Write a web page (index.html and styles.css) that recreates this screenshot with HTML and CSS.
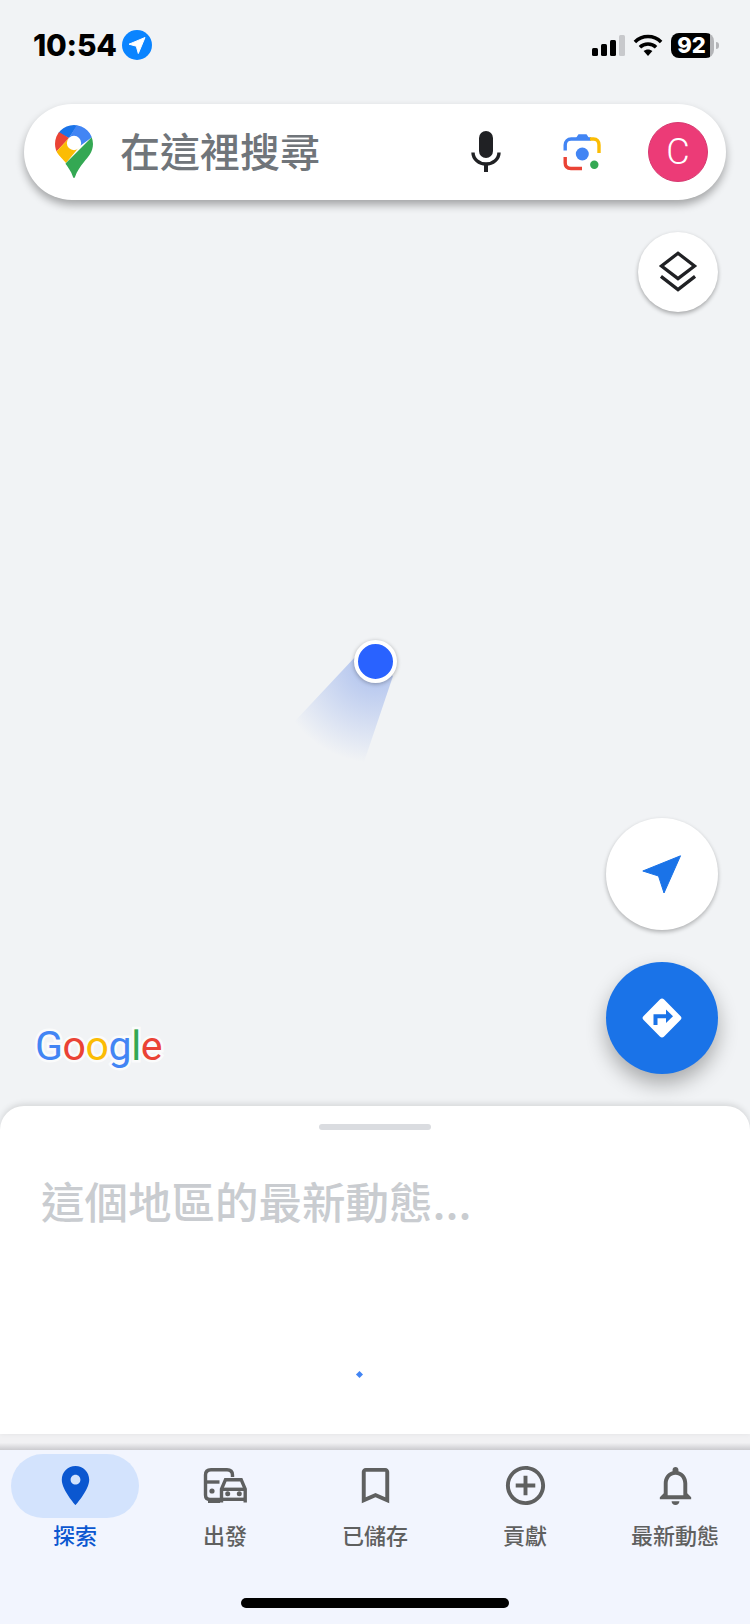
FILE: index.html
```html
<!DOCTYPE html>
<html lang="zh-Hant">
<head>
<meta charset="utf-8">
<title>Google Maps</title>
<link rel="stylesheet" href="styles.css">
</head>
<body>
<div class="app">
  <main class="map">
    <svg class="beam" width="120" height="130" viewBox="0 0 120 130">
      <defs>
        <radialGradient id="beamFill" gradientUnits="userSpaceOnUse" cx="100" cy="10" r="102">
          <stop offset="0" stop-color="#2a5fe0" stop-opacity=".36"/>
          <stop offset=".45" stop-color="#2a5fe0" stop-opacity=".2"/>
          <stop offset="1" stop-color="#2a5fe0" stop-opacity="0"/>
        </radialGradient>
      </defs>
      <polygon points="80,5 117,25 85,120 5,85" fill="url(#beamFill)"/>
    </svg>
    <div class="dot"></div>

    <header class="status">
      <div class="status-left">
        <span class="time">10:54</span>
        <svg class="loc" width="30" height="30" viewBox="0 0 30 30">
          <circle cx="15" cy="15" r="15" fill="#0a84ff"/>
          <path d="M7 14.2 23 7.5 16.3 23.5 14.3 16.2Z" fill="#fff" stroke="#fff" stroke-linejoin="round"/>
        </svg>
      </div>
      <div class="status-right">
        <div class="signal">
          <span class="bar bar1"></span><span class="bar bar2"></span><span class="bar bar3"></span><span class="bar bar4"></span>
        </div>
        <svg class="wifi" width="30" height="22" viewBox="0 0 28 21">
          <path d="M1.5 7.6C8.5.7 19.5.7 26.5 7.6" fill="none" stroke="#000" stroke-width="3.4"/>
          <path d="M6.3 12.6C10.5 8.6 17.5 8.6 21.7 12.6" fill="none" stroke="#000" stroke-width="3.4"/>
          <path d="M9.8 16.2C12 14.2 16 14.2 18.2 16.2L14 21Z" fill="#000"/>
        </svg>
        <div class="battery"><span class="battery-num">92</span></div>
        <span class="battery-tip"></span>
      </div>
    </header>

    <div class="search">
      <svg class="maps-pin" width="38" height="54" viewBox="0 0 38 54">
        <defs>
          <clipPath id="pinClip">
            <path d="M19 0C8.5 0 0 8.5 0 19c0 8 5 13 9 18 4 5 7 9 9 15 .4 1.4 1.6 1.4 2 0 2-6 5-10 9-15 4-5 9-10 9-18C38 8.500 29.500 0 19 0Z"/>
          </clipPath>
        </defs>
        <g clip-path="url(#pinClip)">
          <polygon points="-2,-2 24,-2 14,13 3,8" fill="#1a73e8"/>
          <polygon points="23,-2 42,-2 40,10 25,21 14,13" fill="#4285f4"/>
          <polygon points="-2,-2 4,7 14,13 1,27 -2,27" fill="#ea4335"/>
          <polygon points="1,27 14,13 25,21 11,38" fill="#fbbc04"/>
          <polygon points="39,10 42,60 -4,60 11,38" fill="#34a853"/>
        </g>
        <circle cx="19" cy="18" r="7.200" fill="#fff"/>
      </svg>
      <span class="search-text">在這裡搜尋</span>
      <svg class="mic" width="30" height="42" viewBox="0 0 30 42">
        <rect x="8" y="0" width="14" height="27" rx="7" fill="#202124"/>
        <path d="M2 21.500C2 28 8 33 15 33s13-5 13-11.500" fill="none" stroke="#202124" stroke-width="3.400"/>
        <rect x="13" y="32" width="4" height="9" fill="#202124"/>
      </svg>
      <svg class="lens" width="40" height="40" viewBox="0 0 40 40">
        <path d="M3.200 18.500V13c0-3.700 2.600-6 6-6H29" fill="none" stroke="#4285f4" stroke-width="3.400"/>
        <path d="M13 7.500 16.500 2.200H24.500L28 7.500Z" fill="#4285f4"/>
        <path d="M28 7H31.500C35 7 37 9.500 37 13V21" fill="none" stroke="#fbbc04" stroke-width="3.400"/>
        <path d="M3.200 25V31C3.200 34.500 5.500 36.500 9 36.500H20" fill="none" stroke="#ea4335" stroke-width="3.400"/>
        <circle cx="20.300" cy="22" r="6.500" fill="#4285f4"/>
        <circle cx="32.300" cy="32.700" r="4.200" fill="#34a853"/>
      </svg>
      <div class="avatar">C</div>
    </div>

    <button class="round layers" type="button" aria-label="圖層">
      <svg width="44" height="44" viewBox="0 0 40 40">
        <path d="M20 3 35 14.500 20 26 5 14.500Z" fill="none" stroke="#202124" stroke-width="3" stroke-linejoin="miter"/>
        <path d="M4.500 24 20 36 35.500 24" fill="none" stroke="#202124" stroke-width="3"/>
      </svg>
    </button>

    <div class="map-foot">
      <div class="google"><span class="g-blue">G</span><span class="g-red">o</span><span class="g-yellow">o</span><span class="g-blue">g</span><span class="g-green">l</span><span class="g-red">e</span></div>
      <div class="fabs">
        <button class="round fab" type="button" aria-label="定位">
          <svg width="48" height="48" viewBox="0 0 48 48">
            <path d="M4.800 21 42.500 5.800 26 43 20.500 26Z" fill="#1a73e8" stroke="#1a73e8" stroke-linejoin="round"/>
          </svg>
        </button>
        <button class="round fab fab-blue" type="button" aria-label="路線">
          <svg width="44" height="44" viewBox="0 0 44 44">
            <rect x="7.500" y="7.500" width="29" height="29" rx="3" fill="#fff" transform="rotate(45 22 22)"/>
            <path d="M15.500 29V20.300H27" fill="none" stroke="#1a73e8" stroke-width="4"/>
            <path d="M26 13.500 33 20.300 26 27Z" fill="#1a73e8"/>
          </svg>
        </button>
      </div>
    </div>
  </main>

  <section class="sheet">
    <div class="handle"></div>
    <h2 class="sheet-title">這個地區的最新動態...</h2>
    <div class="spinner"></div>
  </section>
  <div class="strip"></div>

  <nav class="nav">
    <div class="tabs">
      <div class="tab tab-active">
        <div class="tab-icon">
          <svg width="47" height="47" viewBox="0 0 24 24"><path d="M12 2C8.130 2 5 5.130 5 9c0 5.250 7 13 7 13s7-7.750 7-13c0-3.870-3.130-7-7-7zm0 9.500c-1.380 0-2.500-1.120-2.500-2.500s1.120-2.500 2.500-2.500 2.500 1.120 2.500 2.500-1.120 2.500-2.500 2.500z"/></svg>
        </div>
        <span class="tab-label">探索</span>
      </div>
      <div class="tab">
        <div class="tab-icon">
          <svg class="commute" width="46" height="40" viewBox="0 0 46 40">
            <g class="line-icon">
              <path d="M29.500 11V9Q29.500 3.700 24 3.700H8Q2.500 3.700 2.500 9V29Q2.500 33.500 7 33.500H17"/>
              <path d="M3 16H16.500"/>
              <path d="M18.500 36.500V23L22.500 13.700H38.200L42.200 23V36.500"/>
              <path d="M18.500 23.300H42.200"/>
              <path d="M18.500 33.300H42.200"/>
            </g>
            <rect x="5" y="33" width="12" height="4"/>
            <circle cx="9" cy="25" r="2.600"/>
            <circle cx="24.700" cy="27.700" r="2.500"/>
            <circle cx="36.300" cy="27.700" r="2.500"/>
          </svg>
        </div>
        <span class="tab-label">出發</span>
      </div>
      <div class="tab">
        <div class="tab-icon">
          <svg width="47" height="47" viewBox="0 0 24 24"><path d="M17 3H7c-1.100 0-2 .9-2 2v16l7-3 7 3V5c0-1.100-.9-2-2-2zm0 15l-5-2.180L7 18V5h10v13z"/></svg>
        </div>
        <span class="tab-label">已儲存</span>
      </div>
      <div class="tab">
        <div class="tab-icon">
          <svg width="47" height="47" viewBox="0 0 24 24"><path d="M13 7h-2v4H7v2h4v4h2v-4h4v-2h-4V7zm-1-5C6.480 2 2 6.480 2 12s4.480 10 10 10 10-4.480 10-10S17.520 2 12 2zm0 18c-4.410 0-8-3.590-8-8s3.590-8 8-8 8 3.590 8 8-3.590 8-8 8z"/></svg>
        </div>
        <span class="tab-label">貢獻</span>
      </div>
      <div class="tab">
        <div class="tab-icon">
          <svg width="47" height="47" viewBox="0 0 24 24"><path d="M12 22c1.100 0 2-.9 2-2h-4c0 1.100.9 2 2 2zm6-6v-5c0-3.070-1.630-5.640-4.500-6.320V4c0-.83-.67-1.500-1.500-1.500s-1.500.67-1.500 1.500v.68C7.640 5.360 6 7.920 6 11v5l-2 2v1h16v-1l-2-2zm-2 1H8v-6c0-2.480 1.510-4.500 4-4.500s4 2.020 4 4.500v6z"/></svg>
        </div>
        <span class="tab-label">最新動態</span>
      </div>
    </div>
    <div class="home-bar"></div>
  </nav>
</div>
</body>
</html>
```
FILE: styles.css
```css
* { box-sizing: border-box; }
html, body { margin: 0; padding: 0; }
body {
  width: 750px;
  height: 1624px;
  overflow: hidden;
  background: #f1f3f5;
  font-family: "Noto Sans CJK TC", "Noto Sans", sans-serif;
}
.app { display: flex; flex-direction: column; height: 1624px; }

/* Map */
.map {
  position: relative;
  display: flex;
  flex-direction: column;
  height: 1106px;
  flex: none;
  background: #f1f3f5;
}
.beam { position: absolute; left: 276px; top: 651px; }
.dot {
  position: absolute;
  left: 354px;
  top: 640px;
  width: 43px;
  height: 43px;
  border-radius: 50%;
  background: #2962ff;
  border: 4px solid #fff;
  box-shadow: 0 1px 4px rgba(0, 0, 0, .3);
}

/* Status bar */
.status {
  display: flex;
  justify-content: space-between;
  align-items: center;
  height: 90px;
  padding: 0 31px 0 33px;
}
.status-left { display: flex; align-items: center; gap: 5px; }
.time {
  font-family: Inter, "Liberation Sans", sans-serif;
  font-weight: 800;
  font-size: 30px;
  line-height: 36px;
  letter-spacing: -.2px;
  color: #000;
}
.status-right { display: flex; align-items: center; }
.signal { display: flex; align-items: flex-end; gap: 3px; height: 21px; margin-right: 8px; }
.bar { display: block; width: 6px; background: #000; border-radius: 1.5px; }
.bar1 { height: 8px; }
.bar2 { height: 12px; }
.bar3 { height: 16px; }
.bar4 { height: 21px; background: #c8c9cc; }
.wifi { margin-right: 8px; }
.battery {
  display: flex;
  align-items: center;
  justify-content: center;
  width: 43px;
  height: 25px;
  border-radius: 8px;
  background: linear-gradient(90deg, #000 0, #000 90%, #b4b5b8 90%);
}
.battery-num {
  font-family: Inter, "Liberation Sans", sans-serif;
  font-weight: 800;
  font-size: 22px;
  line-height: 25px;
  color: #fff;
  margin-right: 2px;
}
.battery-tip {
  display: block;
  width: 3px;
  height: 7px;
  margin-left: 2px;
  border-radius: 0 3px 3px 0;
  background: #b4b5b8;
}

/* Search */
.search {
  display: flex;
  align-items: center;
  height: 96px;
  margin: 14px 24px 0;
  border-radius: 48px;
  background: #fff;
  box-shadow: 0 5px 9px rgba(0, 0, 0, .32);
}
.maps-pin { margin-left: 31px; margin-top: -1px; flex: none; }
.search-text {
  margin-left: 27px;
  margin-bottom: 4px;
  font-size: 40px;
  line-height: 56px;
  font-weight: 500;
  color: #70757a;
  flex: 1;
}
.mic { margin-top: -1px; flex: none; }
.lens { margin-left: 61px; flex: none; }
.avatar {
  display: flex;
  align-items: center;
  justify-content: center;
  width: 60px;
  height: 60px;
  margin-left: 46px;
  margin-right: 18px;
  flex: none;
  border-radius: 50%;
  background: #ec3b77;
  border: 1px solid #d63a70;
  color: #fff;
  font-family: Roboto, sans-serif;
  font-weight: 300;
  font-size: 36px;
}

/* Round map buttons */
.round {
  display: flex;
  align-items: center;
  justify-content: center;
  padding: 0;
  border: 0;
  border-radius: 50%;
  background: #fff;
}
.layers {
  align-self: flex-end;
  width: 80px;
  height: 80px;
  margin: 32px 32px 0 0;
  box-shadow: 0 2px 4px rgba(0, 0, 0, .32);
}
.map-foot {
  display: flex;
  justify-content: space-between;
  align-items: flex-end;
  margin-top: auto;
  padding: 0 32px 32px 35px;
}
.fabs { display: flex; flex-direction: column; gap: 32px; }
.fab {
  width: 112px;
  height: 112px;
  box-shadow: 0 2px 4px rgba(0, 0, 0, .28);
}
.fab-blue {
  background: #1a73e8;
  box-shadow: 0 10px 20px rgba(0, 0, 0, .3);
}

/* Google wordmark */
.google {
  margin-bottom: 5px;
  font-family: Roboto, "Open Sans", sans-serif;
  font-size: 41px;
  font-weight: 400;
  line-height: 46px;
  letter-spacing: -.4px;
  paint-order: stroke fill;
  -webkit-text-stroke: 5px rgba(255, 255, 255, .7);
}
.g-blue { color: #4285f4; }
.g-red { color: #ea4335; }
.g-yellow { color: #fbbc04; }
.g-green { color: #34a853; }

/* Bottom sheet */
.sheet {
  display: flex;
  flex-direction: column;
  position: relative;
  height: 328px;
  flex: none;
  border-radius: 24px 24px 0 0;
  background: #fff;
  box-shadow: 0 -2px 6px rgba(0, 0, 0, .12);
}
.handle {
  align-self: center;
  width: 112px;
  height: 6px;
  margin-top: 18px;
  margin-left: -1px;
  border-radius: 3px;
  background: #dadce0;
}
.sheet-title {
  margin: 39px 0 0 41px;
  font-size: 43.5px;
  line-height: 64px;
  font-weight: 500;
  color: #c9ccd0;
}
.spinner {
  width: 5px;
  height: 5px;
  margin: 139px 0 0 357px;
  background: #4285f4;
  transform: rotate(45deg);
}
.strip {
  height: 16px;
  flex: none;
  background: linear-gradient(180deg, #f1f1f3 0, #f1f1f3 55%, #cbcbcf 100%);
}

/* Tab bar */
.nav {
  display: flex;
  flex-direction: column;
  flex: 1;
  background: #f2f5fe;
}
.tabs { display: grid; grid-template-columns: repeat(5, 150px); padding-top: 4px; }
.tab { display: flex; flex-direction: column; align-items: center; }
.tab-icon {
  display: flex;
  align-items: center;
  justify-content: center;
  width: 128px;
  height: 64px;
  border-radius: 32px;
}
.tab-icon svg { fill: #5f6060; margin-top: -1px; }
.tab-icon .commute { margin: 0 0 0 2px; }
.line-icon { fill: none; stroke: #5f6060; stroke-width: 3.4; }
.tab-label {
  margin-top: 0;
  font-size: 22px;
  line-height: 32px;
  font-weight: 500;
  color: #5f6060;
}
.tab-active .tab-icon { background: #d3e3fd; }
.tab-active .tab-icon svg { fill: #0b57d0; }
.tab-active .tab-label { color: #0b57d0; }
.home-bar {
  align-self: center;
  width: 268px;
  height: 10px;
  margin-top: auto;
  margin-bottom: 16px;
  border-radius: 5px;
  background: #000;
}
```
